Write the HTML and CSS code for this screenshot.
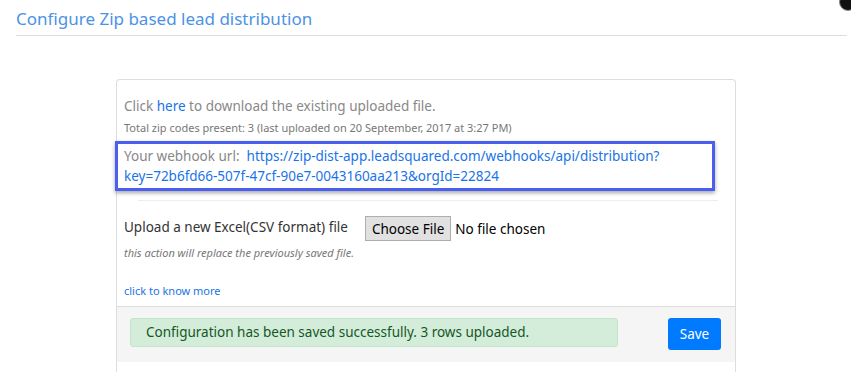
FILE: index.html
```html
<!DOCTYPE html>
<html>
<head>
<meta charset="utf-8">
<link rel="stylesheet" href="styles.css">
</head>
<body>
<div class="close-icon"></div>
<div class="page">
  <h1 class="title">Configure Zip based lead distribution</h1>
  <div class="card">
    <div class="card-body">
      <p class="download">Click <a href="#">here</a> to download the existing uploaded file.</p>
      <p class="total">Total zip codes present: 3 (last uploaded on 20 September, 2017 at 3:27 PM)</p>
      <div class="webhook">
        <span class="wh-label">Your webhook url:</span>&nbsp; <a href="#">https://zip-dist-app.leadsquared.com/webhooks/api/distribution?<br>key=72b6fd66-507f-47cf-90e7-0043160aa213&amp;orgId=22824</a>
      </div>
      <div class="divider"></div>
      <div class="upload">
        <span class="upload-label">Upload a new Excel(CSV format) file</span>
        <span class="file-btn">Choose File</span>
        <span class="file-none">No file chosen</span>
      </div>
      <p class="hint">this action will replace the previously saved file.</p>
      <a class="more" href="#">click to know more</a>
    </div>
    <div class="card-footer">
      <div class="alert">Configuration has been saved successfully. 3 rows uploaded.</div>
      <button class="save">Save</button>
    </div>
  </div>
</div>
</body>
</html>
```
FILE: styles.css
```css
html, body {
  margin: 0;
  padding: 0;
  background: #fff;
  font-family: "Noto Sans", "Open Sans", sans-serif;
  overflow: hidden;
}
.close-icon {
  position: absolute;
  right: -6px;
  top: -7px;
  width: 16px;
  height: 16px;
  border-radius: 50%;
  background: #111;
  border: 1px solid #888;
}
.page {
  padding: 0 4px 0 16px;
}
.title {
  margin: 0;
  padding: 9px 0 6px;
  font-size: 17px;
  font-weight: normal;
  color: #4c92e6;
  line-height: 20px;
  border-bottom: 1px solid #ddd;
}
.card {
  margin: 43px 0 0 100px;
  width: 618px;
  border: 1px solid #ddd;
  border-bottom: none;
  border-radius: 4px 4px 0 0;
  height: 300px;
}
.card-body {
  padding: 16px 7px 0 7px;
}
a {
  color: #1a73e8;
  text-decoration: none;
}
.download {
  margin: 0;
  font-size: 13.5px;
  line-height: 20px;
  color: #888;
}
.total {
  margin: 4px 0 0;
  font-size: 11px;
  line-height: 16px;
  color: #777;
}
.webhook {
  margin: 5px 0 0 -9px;
  width: 588px;
  border: 3px solid #4a5ef0;
  padding: 2px 0 2px 6px;
  font-size: 13.5px;
  line-height: 20px;
  box-shadow: 0 2px 4px rgba(0,0,0,0.35);
  background: #fff;
}
.wh-label {
  color: #888;
}
.divider {
  margin: 9px 0 0 14px;
  width: 580px;
  border-top: 1px solid #eee;
}
.upload {
  margin-top: 15px;
  display: flex;
  align-items: center;
  font-size: 13.5px;
  color: #333;
}
.upload-label {
  margin-right: 17px;
  margin-top: -4px;
}
.file-btn {
  display: inline-block;
  border: 1px solid #adadad;
  background: #e1e1e1;
  padding: 4px 6px 3px;
  font-size: 13.5px;
  line-height: 16px;
  color: #000;
}
.file-none {
  margin-left: 4px;
  color: #000;
}
.hint {
  margin: 4px 0 0;
  font-size: 11px;
  font-style: italic;
  color: #777;
}
.more {
  display: block;
  margin-top: 23px;
  font-size: 11px;
  line-height: 16px;
}
.card-footer {
  margin-top: 7px;
  background: #f5f5f5;
  border-top: 1px solid #ddd;
  display: flex;
  align-items: center;
  justify-content: space-between;
  padding: 11px 14px 12px 13px;
}
.alert {
  width: 456px;
  background: #d4edda;
  border: 1px solid #c3e6cb;
  border-radius: 3px;
  color: #155724;
  font-size: 13.5px;
  line-height: 19px;
  padding: 4px 15px;
  margin-top: -3px;
}
.save {
  background: #007bff;
  border: none;
  border-radius: 3px;
  color: #fff;
  font-family: inherit;
  font-size: 13.5px;
  width: 53px;
  height: 32px;
  padding: 0;
}
```
